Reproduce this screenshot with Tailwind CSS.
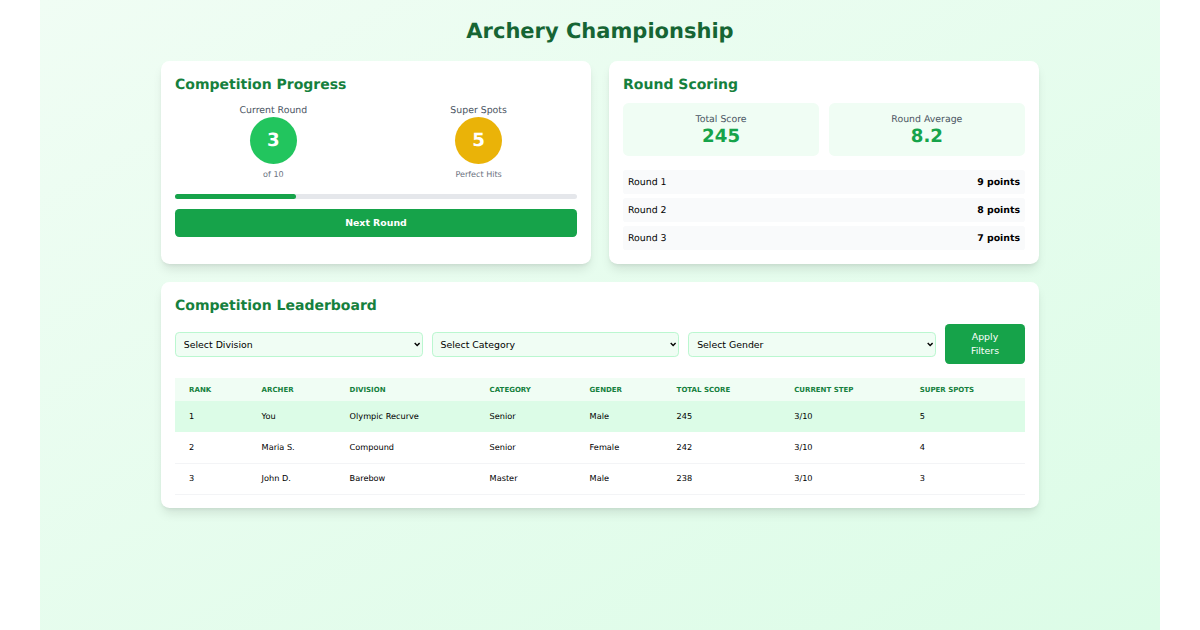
<!DOCTYPE html>
<html lang="en">
<head>
    <meta charset="UTF-8">
    <meta name="viewport" content="width=device-width, initial-scale=1.0">
    <title>Archery Championship</title>
    <script src="https://cdn.jsdelivr.net/npm/@tailwindcss/browser@4"></script>
</head>
<body class="bg-white font-['DejaVu_Sans',sans-serif] text-black overflow-hidden [text-rendering:geometricPrecision]">
    <!-- the reference is a 1714px wide page shown at 70% -->
    <div class="w-[1714.3px] h-[900px] [zoom:0.7]">
        <div class="mx-auto w-[1600px] h-[900px] bg-gradient-to-br from-[#f0fdf4] to-[#dcfce7] pt-[27px]">
            <h1 class="text-center text-3xl font-bold text-[#166534] mb-[24px]">Archery Championship</h1>

            <div class="w-[1254px] mx-auto">
                <div class="grid grid-cols-2 gap-[26px] mb-[26px]">
                    <!-- Progress -->
                    <div class="bg-white rounded-xl shadow-lg p-5 h-[290px]">
                        <h2 class="text-xl font-bold text-[#15803d] pt-px mb-[11px]">Competition Progress</h2>
                        <div class="flex justify-between pl-[92px] pr-[100px] mb-5">
                            <div class="flex flex-col items-center">
                                <div class="text-[13.4px] h-5 leading-[23px] text-[#4b5563]">Current Round</div>
                                <div class="w-[67px] h-[67px] rounded-full bg-[#22c55e] text-white font-bold text-[26px] flex items-center justify-center">3</div>
                                <div class="text-[11.5px] leading-4 mt-[7px] text-[#6b7280]">of 10</div>
                            </div>
                            <div class="flex flex-col items-center">
                                <div class="text-[13.4px] h-5 leading-[23px] text-[#4b5563]">Super Spots</div>
                                <div class="w-[67px] h-[67px] rounded-full bg-[#eab308] text-white font-bold text-[26px] flex items-center justify-center">5</div>
                                <div class="text-[11.5px] leading-4 mt-[7px] text-[#6b7280]">Perfect Hits</div>
                            </div>
                        </div>
                        <div class="h-2 rounded-full bg-[#e5e7eb] mb-[13px]">
                            <div class="h-full w-[30%] rounded-full bg-[#16a34a]"></div>
                        </div>
                        <button class="w-full h-10 pt-px rounded-md bg-[#16a34a] text-white font-bold text-[13.4px]">Next Round</button>
                    </div>

                    <!-- Scoring -->
                    <div class="bg-white rounded-xl shadow-lg p-5 h-[290px]">
                        <h2 class="text-xl font-bold text-[#15803d] pt-px mb-[11px]">Round Scoring</h2>
                        <div class="grid grid-cols-2 gap-[14px] mb-5">
                            <div class="rounded-lg bg-[#f0fdf4] text-center p-3">
                                <div class="text-[13.4px] h-5 leading-[25px] text-[#4b5563]">Total Score</div>
                                <div class="text-[26px] h-8 leading-[35px] font-bold text-[#16a34a]">245</div>
                            </div>
                            <div class="rounded-lg bg-[#f0fdf4] text-center p-3">
                                <div class="text-[13.4px] h-5 leading-[25px] text-[#4b5563]">Round Average</div>
                                <div class="text-[26px] h-8 leading-[35px] font-bold text-[#16a34a]">8.2</div>
                            </div>
                        </div>
                        <div class="flex flex-col gap-[6px] text-[13.4px]">
                            <div class="h-[34px] flex items-center justify-between px-[7px] pt-[3px] rounded bg-[#f9fafb]"><span>Round 1</span><span class="font-bold">9 points</span></div>
                            <div class="h-[34px] flex items-center justify-between px-[7px] pt-[3px] rounded bg-[#f9fafb]"><span>Round 2</span><span class="font-bold">8 points</span></div>
                            <div class="h-[34px] flex items-center justify-between px-[7px] pt-[3px] rounded bg-[#f9fafb]"><span>Round 3</span><span class="font-bold">7 points</span></div>
                        </div>
                    </div>
                </div>

                <!-- Leaderboard -->
                <div class="bg-white rounded-xl shadow-lg p-5 h-[323px]">
                    <h2 class="text-xl font-bold text-[#15803d] pt-px mb-[11px]">Competition Leaderboard</h2>
                    <div class="flex items-center gap-[13px] mb-5">
                        <div class="relative flex-1 min-w-0 mt-[2px]">
                            <select class="block w-full h-9 px-[11px] rounded-md border-2 border-[#bbf7d0] bg-[#f0fdf4] text-[13.4px] appearance-none"><option>Select Division</option></select>
                            <svg class="absolute right-[4px] top-[14px] w-[9px] h-[7px] pointer-events-none" viewBox="0 0 9 7"><path d="M1 1.5l3.5 3.5 3.5-3.5" fill="none" stroke="#000" stroke-width="2"/></svg>
                        </div>
                        <div class="relative flex-1 min-w-0 mt-[2px]">
                            <select class="block w-full h-9 px-[11px] rounded-md border-2 border-[#bbf7d0] bg-[#f0fdf4] text-[13.4px] appearance-none"><option>Select Category</option></select>
                            <svg class="absolute right-[4px] top-[14px] w-[9px] h-[7px] pointer-events-none" viewBox="0 0 9 7"><path d="M1 1.5l3.5 3.5 3.5-3.5" fill="none" stroke="#000" stroke-width="2"/></svg>
                        </div>
                        <div class="relative flex-1 min-w-0 mt-[2px]">
                            <select class="block w-full h-9 px-[11px] rounded-md border-2 border-[#bbf7d0] bg-[#f0fdf4] text-[13.4px] appearance-none"><option>Select Gender</option></select>
                            <svg class="absolute right-[4px] top-[14px] w-[9px] h-[7px] pointer-events-none" viewBox="0 0 9 7"><path d="M1 1.5l3.5 3.5 3.5-3.5" fill="none" stroke="#000" stroke-width="2"/></svg>
                        </div>
                        <button class="w-[114px] h-[57px] rounded-md bg-[#16a34a] text-white text-[13.4px] leading-5 px-6">Apply Filters</button>
                    </div>
                    <table class="w-full table-fixed text-[11.7px] text-left">
                        <colgroup>
                            <col class="w-[103.6px]"><col class="w-[125.7px]"><col class="w-[200px]"><col class="w-[142.9px]"><col class="w-[124.3px]"><col class="w-[168px]"><col class="w-[179.3px]"><col>
                        </colgroup>
                        <thead class="bg-[#f0fdf4] text-[#15803d] uppercase text-[10px]">
                            <tr class="h-[33px]">
                                <th class="px-5 pt-[2px] font-bold">Rank</th><th class="px-5 pt-[2px] font-bold">Archer</th><th class="px-5 pt-[2px] font-bold">Division</th><th class="px-5 pt-[2px] font-bold">Category</th><th class="px-5 pt-[2px] font-bold">Gender</th><th class="px-5 pt-[2px] font-bold">Total Score</th><th class="px-5 pt-[2px] font-bold">Current Step</th><th class="px-5 pt-[2px] font-bold">Super Spots</th>
                            </tr>
                        </thead>
                        <tbody>
                            <tr class="h-[44.3px] bg-[#dcfce7]">
                                <td class="px-5">1</td><td class="px-5">You</td><td class="px-5">Olympic Recurve</td><td class="px-5">Senior</td><td class="px-5">Male</td><td class="px-5">245</td><td class="px-5">3/10</td><td class="px-5">5</td>
                            </tr>
                            <tr class="h-[44.3px] border-b border-[#f3f4f6]">
                                <td class="px-5">2</td><td class="px-5">Maria S.</td><td class="px-5">Compound</td><td class="px-5">Senior</td><td class="px-5">Female</td><td class="px-5">242</td><td class="px-5">3/10</td><td class="px-5">4</td>
                            </tr>
                            <tr class="h-[44.3px] border-b border-[#f3f4f6]">
                                <td class="px-5">3</td><td class="px-5">John D.</td><td class="px-5">Barebow</td><td class="px-5">Master</td><td class="px-5">Male</td><td class="px-5">238</td><td class="px-5">3/10</td><td class="px-5">3</td>
                            </tr>
                        </tbody>
                    </table>
                </div>
            </div>
        </div>
    </div>
</body>
</html>
